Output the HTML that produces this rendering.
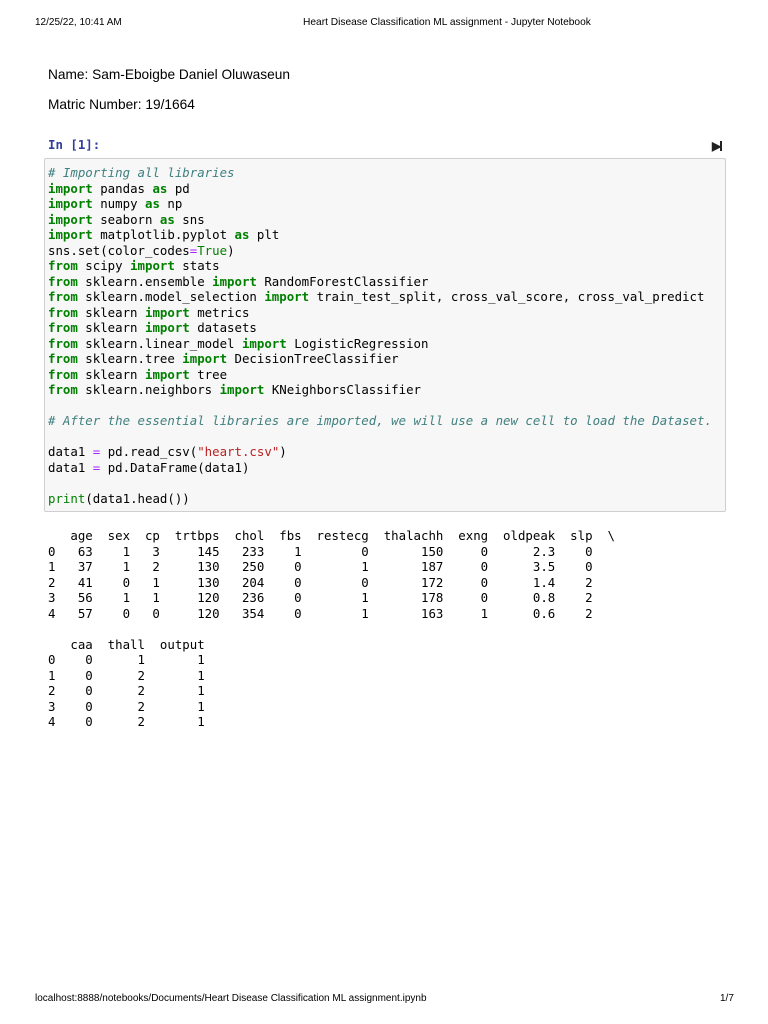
<!DOCTYPE html>
<html><head><meta charset="utf-8"><style>
body{margin:0;width:768px;height:1024px;background:#fff;position:relative;font-family:"Liberation Sans",sans-serif;color:#000;overflow:hidden}
.h{position:absolute;top:17px;font-size:10px}
.t{position:absolute;font-size:13.7px;left:48px}
pre{margin:0;font-family:"DejaVu Sans Mono","Liberation Mono",monospace;font-size:12.4px;line-height:15.5px}
.cell{position:absolute;left:44px;top:158px;width:680px;height:352px;border:1px solid #cfcfcf;background:#f7f7f7;border-radius:2px}
.k{color:#008000;font-weight:bold}.c{color:#408080;font-style:italic}.o{color:#aa22ff}.s{color:#ba2121}.b{color:#008000}
</style></head><body>
<div class="h" style="left:35px">12/25/22, 10:41 AM</div>
<div class="h" style="left:303px;font-size:10.2px">Heart Disease Classification ML assignment - Jupyter Notebook</div>
<div class="t" style="top:67px">Name: Sam-Eboigbe Daniel Oluwaseun</div>
<div class="t" style="top:97px">Matric Number: 19/1664</div>
<pre style="position:absolute;left:48px;top:137px;color:#303f9f;font-weight:bold">In [1]:</pre>
<div style="position:absolute;left:712px;top:139px;font-size:12px;font-weight:bold;color:#222">&#9654;<span style="display:inline-block;width:2px;height:10px;background:#222;margin-left:-1px;vertical-align:-1px"></span></div>
<div class="cell"></div>
<pre style="position:absolute;left:48px;top:165px"><span class="c"># Importing all libraries</span>
<span class="k">import</span> pandas <span class="k">as</span> pd
<span class="k">import</span> numpy <span class="k">as</span> np
<span class="k">import</span> seaborn <span class="k">as</span> sns
<span class="k">import</span> matplotlib.pyplot <span class="k">as</span> plt
sns.set(color_codes<span class="o">=</span><span class="b">True</span>)
<span class="k">from</span> scipy <span class="k">import</span> stats
<span class="k">from</span> sklearn.ensemble <span class="k">import</span> RandomForestClassifier
<span class="k">from</span> sklearn.model_selection <span class="k">import</span> train_test_split, cross_val_score, cross_val_predict
<span class="k">from</span> sklearn <span class="k">import</span> metrics
<span class="k">from</span> sklearn <span class="k">import</span> datasets
<span class="k">from</span> sklearn.linear_model <span class="k">import</span> LogisticRegression
<span class="k">from</span> sklearn.tree <span class="k">import</span> DecisionTreeClassifier
<span class="k">from</span> sklearn <span class="k">import</span> tree
<span class="k">from</span> sklearn.neighbors <span class="k">import</span> KNeighborsClassifier

<span class="c"># After the essential libraries are imported, we will use a new cell to load the Dataset.</span>

data1 <span class="o">=</span> pd.read_csv(<span class="s">"heart.csv"</span>)
data1 <span class="o">=</span> pd.DataFrame(data1)

<span class="b">print</span>(data1.head())</pre>
<pre style="position:absolute;left:48px;top:528px">   age  sex  cp  trtbps  chol  fbs  restecg  thalachh  exng  oldpeak  slp  \
0   63    1   3     145   233    1        0       150     0      2.3    0   
1   37    1   2     130   250    0        1       187     0      3.5    0   
2   41    0   1     130   204    0        0       172     0      1.4    2   
3   56    1   1     120   236    0        1       178     0      0.8    2   
4   57    0   0     120   354    0        1       163     1      0.6    2   

   caa  thall  output
0    0      1       1
1    0      2       1
2    0      2       1
3    0      2       1
4    0      2       1</pre>
<div class="h" style="left:35px;top:993px">localhost:8888/notebooks/Documents/Heart Disease Classification ML assignment.ipynb</div>
<div class="h" style="left:720px;top:993px">1/7</div>
</body></html>
